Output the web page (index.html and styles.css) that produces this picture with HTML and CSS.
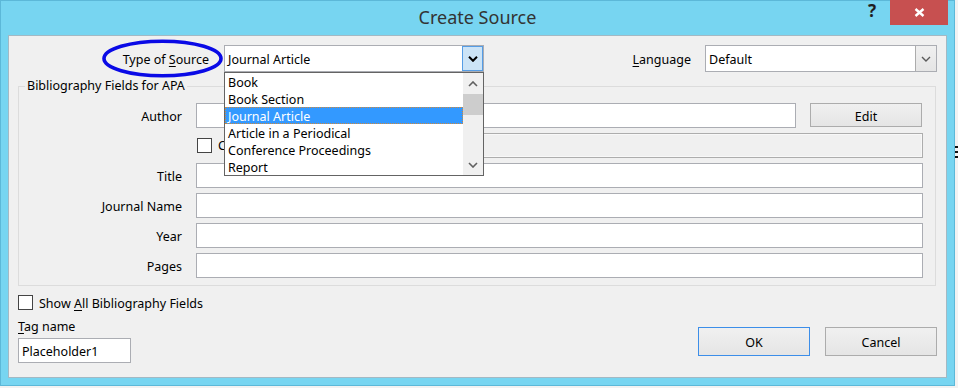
FILE: index.html
```html
<!DOCTYPE html>
<html>
<head>
<meta charset="utf-8">
<title>Create Source</title>
<link rel="stylesheet" href="styles.css">
</head>
<body>
<div class="window">
  <div class="titlebar">
    <div></div>
    <div class="title">Create Source</div>
    <div class="caption-btns">
      <span class="help">?</span>
      <span class="close"><svg width="11" height="9" viewBox="0 0 11 9"><path d="M1.5 1 L9.5 8 M9.5 1 L1.5 8" stroke="#fff" stroke-width="2.4" fill="none"/></svg></span>
    </div>
  </div>
  <div class="client">
    <div class="toprow">
      <div class="type-label">
        <span>Type of <u>S</u>ource</span>
        <svg class="oval" width="121" height="39" viewBox="0 0 121 39"><ellipse cx="60.5" cy="19.5" rx="58.5" ry="17.3" fill="none" stroke="#0a0ae6" stroke-width="3.6"/></svg>
      </div>
      <div class="combo type-combo">
        <span class="combo-text">Journal Article</span>
        <span class="combo-btn pressed"><svg width="10" height="6" viewBox="0 0 10 6"><path d="M1 0.8 L5 4.8 L9 0.8" fill="none" stroke="#000" stroke-width="2"/></svg></span>
        <div class="listbox">
          <div class="items">
            <div class="item">Book</div>
            <div class="item">Book Section</div>
            <div class="item selected">Journal Article</div>
            <div class="item">Article in a Periodical</div>
            <div class="item">Conference Proceedings</div>
            <div class="item">Report</div>
          </div>
          <div class="scrollbar">
            <span class="arrow"><svg width="10" height="6" viewBox="0 0 10 6"><path d="M1 5 L5 1 L9 5" fill="none" stroke="#606060" stroke-width="1.6"/></svg></span>
            <span class="thumb"></span>
            <span class="track"></span>
            <span class="arrow"><svg width="10" height="6" viewBox="0 0 10 6"><path d="M1 1 L5 5 L9 1" fill="none" stroke="#606060" stroke-width="1.6"/></svg></span>
          </div>
        </div>
      </div>
      <div class="lang">
        <span class="lang-label"><u>L</u>anguage</span>
        <div class="combo lang-combo">
          <span class="combo-text">Default</span>
          <span class="combo-btn"><svg width="10" height="6" viewBox="0 0 10 6"><path d="M1 1 L5 5 L9 1" fill="none" stroke="#5a5a5a" stroke-width="1.4"/></svg></span>
        </div>
      </div>
    </div>

    <fieldset class="group">
      <legend>Bibliography Fields for APA</legend>
      <div class="fields">
        <span class="flabel">Author</span>
        <div class="author-cell"><div class="input author-input"></div><button class="btn edit">Edit</button></div>
        <span></span>
        <div class="corp-cell"><span class="checkbox"></span><span class="corp-label">Corporate Author</span><div class="input disabled"></div></div>
        <span class="flabel">Title</span>
        <div class="input"></div>
        <span class="flabel">Journal Name</span>
        <div class="input"></div>
        <span class="flabel">Year</span>
        <div class="input"></div>
        <span class="flabel">Pages</span>
        <div class="input"></div>
      </div>
    </fieldset>

    <div class="bottom">
      <div class="bottom-left">
        <div class="check-row"><span class="checkbox"></span><span class="check-text">Show <u>A</u>ll Bibliography Fields</span></div>
        <div class="tag-label"><u>T</u>ag name</div>
        <div class="input tag-input">Placeholder1</div>
      </div>
      <div class="buttons">
        <button class="btn dlg ok">OK</button>
        <button class="btn dlg">Cancel</button>
      </div>
    </div>
  </div>
</div>
<div class="edge-mark"><span></span><span></span><span></span></div>
</body>
</html>
```

FILE: styles.css
```css
* { box-sizing: border-box; }
html, body { margin: 0; padding: 0; }
body {
  width: 958px;
  height: 388px;
  overflow: hidden;
  position: relative;
  background: #f2f2f2;
  font-family: "Noto Sans", "Liberation Sans", sans-serif;
  font-size: 12.5px;
  color: #000;
}
u { text-decoration: underline; text-underline-offset: 2px; }

.window {
  width: 955px;
  height: 386px;
  background: #77d5f1;
  border: 1px solid #5cb8d8;
  display: flex;
  flex-direction: column;
}

.titlebar {
  height: 34px;
  display: grid;
  grid-template-columns: 1fr auto 1fr;
  align-items: start;
}
.title {
  font-size: 18px;
  line-height: 32px;
  color: #333;
}
.caption-btns {
  display: flex;
  justify-content: flex-end;
  align-items: flex-start;
  margin-top: -1px;
}
.help {
  font-weight: bold;
  font-size: 17px;
  line-height: 24px;
  color: #1f1f1f;
  margin-right: 14px;
  margin-top: -1px;
}
.close {
  width: 58px;
  height: 25px;
  background: #c75050;
  display: flex;
  align-items: center;
  justify-content: center;
  margin-right: 6px;
}

.client {
  flex: 1;
  margin: 0 7px 7px 7px;
  background: #f0f0f0;
  border: 1px solid #a3b9c4;
  display: flex;
  flex-direction: column;
}

.toprow {
  display: flex;
  align-items: center;
  height: 27px;
  margin-top: 9px;
  padding-right: 9px;
}
.type-label {
  width: 200px;
  height: 27px;
  position: relative;
  display: flex;
  align-items: center;
  justify-content: flex-end;
  margin-right: 15px;
  padding-top: 1px;
}
.oval {
  position: absolute;
  right: -14px;
  top: -6px;
}

.combo {
  position: relative;
  height: 27px;
  background: #fff;
  border: 1px solid #abadb3;
  display: flex;
  align-items: center;
}
.type-combo { width: 260px; }
.lang-combo { width: 232px; }
.combo-text { flex: 1; padding-left: 3px; padding-top: 1px; }
.combo-btn {
  width: 21px;
  height: 25px;
  display: flex;
  align-items: center;
  justify-content: center;
  background: linear-gradient(#f0f0f0, #e5e5e5);
  border-left: 1px solid #acacac;
}
.combo-btn.pressed {
  background: #cce4f7;
  border: 1px solid #569de5;
}

.listbox {
  position: absolute;
  top: calc(100% + 1px);
  left: -1px;
  width: 260px;
  height: 104px;
  background: #fff;
  border: 1px solid #646464;
  display: flex;
  z-index: 5;
}
.items { width: 238px; }
.item {
  height: 17px;
  line-height: 19px;
  padding-left: 3px;
  white-space: nowrap;
}
.item.selected {
  background: #3399ff;
  color: #fff;
  outline: 1px dotted #d0883a;
  outline-offset: -1px;
}
.scrollbar {
  width: 20px;
  background: #f0f0f0;
  display: flex;
  flex-direction: column;
}
.arrow {
  height: 21px;
  display: flex;
  align-items: center;
  justify-content: center;
}
.thumb {
  height: 21px;
  background: #cdcdcd;
}
.track { flex: 1; }

.lang {
  margin-left: auto;
  display: flex;
  align-items: center;
}
.lang-label { margin-right: 14px; padding-top: 1px; }

.group {
  margin: 6px 10px 0 9px;
  padding: 0 12px 7px 0;
  border: 1px solid #dcdcdc;
  min-width: 0;
}
.group legend {
  margin-left: 6px;
  padding: 0 2px;
  line-height: 16px;
}
.fields {
  margin-top: 9px;
  display: grid;
  grid-template-columns: 163px 1fr;
  grid-auto-rows: 25px;
  column-gap: 14px;
  row-gap: 5px;
}
.flabel {
  display: flex;
  align-items: center;
  justify-content: flex-end;
  padding-top: 2px;
}
.input {
  height: 25px;
  background: #fff;
  border: 1px solid #abadb3;
  display: flex;
  align-items: center;
  padding-left: 3px;
  padding-top: 1px;
}
.author-cell { display: flex; gap: 14px; }
.author-input { width: 600px; }
.btn {
  font-family: inherit;
  font-size: 12.5px;
  color: #000;
  background: linear-gradient(#f0f0f0, #e5e5e5);
  border: 1px solid #acacac;
  padding: 2px 0 0 0;
  margin: 0;
}
.edit { width: 112px; height: 24px; }
.corp-cell {
  display: flex;
  align-items: center;
}
.checkbox {
  width: 15px;
  height: 15px;
  border: 1px solid #444;
  background: #fff;
  flex: none;
}
.corp-cell .checkbox { margin-left: 1px; }
.corp-label { margin-left: 6px; margin-right: 8px; }
.input.disabled {
  flex: 1;
  background: #f0f0f0;
  border-color: #adadad;
  box-shadow: inset 0 0 0 1px #f8f8f8;
}

.bottom {
  display: flex;
  justify-content: space-between;
  padding: 0 9px 0 9px;
}
.bottom-left { display: flex; flex-direction: column; }
.check-row {
  margin-top: 8px;
  height: 16px;
  display: flex;
  align-items: center;
  gap: 6px;
}
.check-text { padding-top: 2px; }
.tag-label {
  margin-top: 9px;
  line-height: 16px;
}
.tag-input {
  margin-top: 3px;
  width: 113px;
}
.buttons {
  display: flex;
  gap: 15px;
  margin-top: 41px;
}
.dlg { width: 112px; height: 29px; }
.ok { border-color: #3c8ee9; }

.edge-mark {
  position: absolute;
  left: 955px;
  top: 146px;
  width: 3px;
  display: flex;
  flex-direction: column;
  gap: 3px;
}
.edge-mark span {
  height: 2px;
  background: #111;
}
```
